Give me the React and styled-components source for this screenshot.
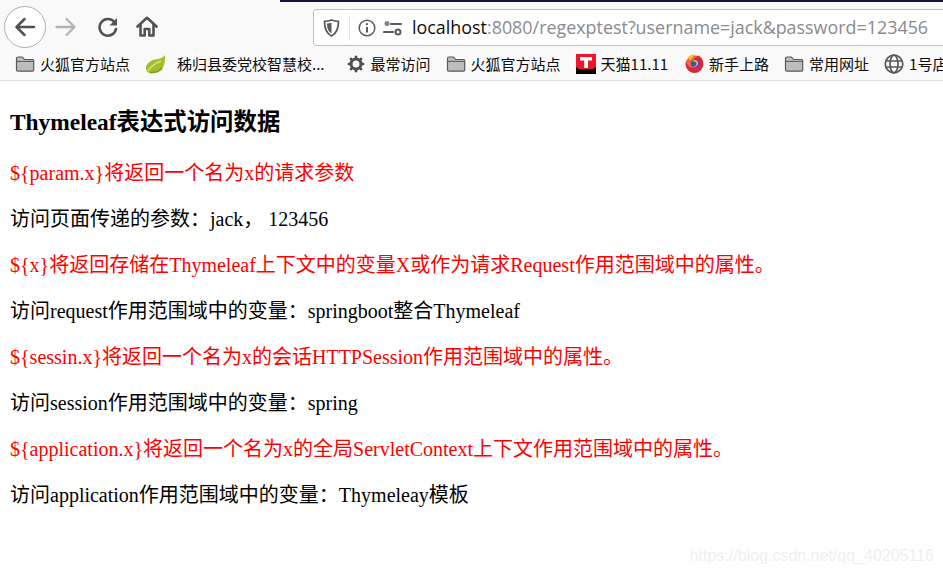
import React from "react";
import styled, { createGlobalStyle } from "styled-components";

const Global = createGlobalStyle`
  html, body { margin: 0; padding: 0; background: #fff; overflow: hidden; }
  body { font-family: "Liberation Serif", "Noto Sans CJK SC", serif; }
`;

const Page = styled.div`
  width: 943px;
  height: 575px;
  position: relative;
  overflow: hidden;
  background: #fff;
`;

const Chrome = styled.header`
  height: 81px;
  box-sizing: border-box;
  background: #f9f9fa;
  border-bottom: 1px solid #e0e0e1;
  position: relative;
  overflow: hidden;
`;

const TopEdge = styled.div`
  position: absolute;
  top: 0;
  left: 280px;
  right: 0;
  height: 2px;
  background: #15143a;
`;

const NavRow = styled.div`
  height: 46px;
  padding: 9px 0 0 4px;
  box-sizing: border-box;
  display: flex;
  align-items: flex-start;
`;

const BackButton = styled.div`
  width: 42px;
  height: 42px;
  margin-top: -3px;
  box-sizing: border-box;
  border: 1px solid #b1b1b3;
  border-radius: 50%;
  background: #fff;
  display: flex;
  align-items: center;
  justify-content: center;
  flex: none;
`;

const NavIcon = styled.div`
  width: 22px;
  height: 22px;
  margin-top: 7px;
  margin-left: ${(p) => p.$ml}px;
  flex: none;
  display: flex;
`;

const UrlBar = styled.div`
  width: 640px;
  height: 37px;
  margin-left: 155px;
  flex: none;
  box-sizing: border-box;
  background: #fff;
  border: 1px solid #c1c1c1;
  border-radius: 3px;
  display: flex;
  align-items: center;
  padding-left: 9px;
`;

const UrlDivider = styled.span`
  width: 1px;
  height: 26px;
  background: #e3e3e4;
  margin: 0 8px 0 9px;
`;

const UrlPerm = styled.span`
  display: flex;
  margin-left: 7px;
`;

const UrlText = styled.span`
  margin-left: 10px;
  padding-bottom: 2px;
  font: 17.9px "Open Sans", "Noto Sans", sans-serif;
  color: #8a8a8e;
  white-space: nowrap;
  b { font-weight: 400; color: #0c0c0d; }
`;

const BookmarkRow = styled.div`
  height: 34px;
  box-sizing: border-box;
  padding: 1px 0 0 15px;
  display: flex;
  align-items: center;
  white-space: nowrap;
`;

const Bookmark = styled.div`
  display: flex;
  align-items: center;
  flex: none;
  margin-right: ${(p) => p.$mr ?? 15}px;
  gap: ${(p) => p.$gap ?? 5}px;
  font: 15px "Noto Sans CJK SC", "Noto Sans", sans-serif;
  color: #0c0c0d;
`;

const Content = styled.main`
  padding: 0 10px;
`;

const Heading = styled.h3`
  margin: 0;
  padding-top: 28px;
  font-size: 23.4px;
  line-height: 27px;
  font-weight: 700;
  color: #000;
`;

const Line = styled.p`
  margin: 0;
  padding-top: ${(p) => (p.$first ? 24 : 20)}px;
  font-size: 20px;
  line-height: 26px;
  color: ${(p) => (p.$red ? "#ff0000" : "#000")};
  white-space: nowrap;
`;

const Watermark = styled.div`
  position: absolute;
  right: 9px;
  top: 547px;
  font: 16px "Liberation Sans", Arial, sans-serif;
  color: #efefef;
  white-space: nowrap;
`;

const Folder = () => (
  <svg width="20" height="18" viewBox="0 0 20 18">
    <path d="M1.500 15V3.500C1.500 2.700 2 2 3 2h4.500l2 2.500H17.500c.8 0 1.200.5 1.200 1.200V15c0 .8-.5 1.200-1.200 1.200H3c-1 0-1.500-.5-1.500-1.200z" fill="#bdbdbf" stroke="#59595c" strokeWidth="1.200" />
    <path d="M2 6.400h16.500" stroke="#59595c" strokeWidth="1" />
  </svg>
);

const Leaf = () => (
  <svg width="21" height="20" viewBox="0 0 21 20">
    <path d="M20 1C18 4 15 4.500 10 5.500 4 6.700.5 11 1 15c.2 2 1.500 3.700 3.500 4 4 .6 10 0 13-4.500C19.500 11 20.500 6 20 1z" fill="#a3bf2c" />
    <path d="M3 17c3-5 8-8 13-10" stroke="#d5e27a" strokeWidth="1.500" fill="none" />
    <path d="M5 18.500c5 .3 9-1 12-4.500" stroke="#7d9e22" strokeWidth="1.500" fill="none" />
  </svg>
);

const Gear = () => (
  <svg width="18" height="18" viewBox="0 0 18 18">
    <circle cx="9" cy="9" r="5" fill="none" stroke="#4f4f52" strokeWidth="3" />
    <path d="M9 .8v3M9 14.200v3M.8 9h3M14.200 9h3M3.200 3.200l2.100 2.100M12.700 12.700l2.100 2.100M14.800 3.200l-2.100 2.100M5.300 12.700l-2.100 2.100" stroke="#4f4f52" strokeWidth="2.600" />
  </svg>
);

const Tmall = () => (
  <svg width="20" height="20" viewBox="0 0 20 20">
    <rect width="20" height="20" fill="#000" />
    <path d="M0 0h20v13.500c-1.500 0-2 1.500-3 1.500H3c-1 0-1.500-1.500-3-1.500z" fill="#f0142f" />
    <path d="M4 3h12v3.500h-4V14H8.200V6.500H4z" fill="#fff" />
  </svg>
);

const Firefox = () => (
  <svg width="19" height="19" viewBox="0 0 19 19">
    <circle cx="9.500" cy="10" r="8.800" fill="#f2683a" />
    <path d="M9.500 18.800A8.800 8.800 0 0 1 1 7.500c1 3 3 6 7 6.500 4 .4 6.500-2 6-5C13.500 6.500 11 5.500 8.500 6c1-2 3.500-4 5-4.500 3 1.500 4.800 4.800 4.800 8.500a8.800 8.800 0 0 1-8.800 8.800z" fill="#e0233f" />
    <circle cx="10" cy="9.500" r="4.300" fill="#3b4fbf" />
    <path d="M7 7c2-1.600 5.500-1 6 1.500.5 3-2.500 5-5 4 2 0 3.500-1 3.500-2.800S9 7.200 7 7z" fill="#fbb72e" />
    <path d="M3 3C5 .8 8 .5 10.500 1 8 2 6.500 4 6 6 4.500 6 3.500 5 3 3z" fill="#ffb93b" />
  </svg>
);

const Globe = () => (
  <svg width="20" height="20" viewBox="0 0 20 20" fill="none" stroke="#59595c" strokeWidth="1.700">
    <circle cx="10" cy="10" r="8.800" />
    <ellipse cx="10" cy="10" rx="4" ry="8.800" />
    <path d="M1.800 7h16.400M1.800 13h16.400" />
  </svg>
);

const BackIcon = () => (
  <svg width="22" height="22" viewBox="0 0 22 22" fill="none" stroke="#525256" strokeWidth="2.500" strokeLinecap="round" strokeLinejoin="round">
    <path d="M20 11H2.500M10.500 3 2.500 11l8 8" />
  </svg>
);

const ForwardIcon = () => (
  <svg width="22" height="22" viewBox="0 0 22 22" fill="none" stroke="#b5b5b7" strokeWidth="2.300" strokeLinecap="round" strokeLinejoin="round">
    <path d="M1.500 11H19.500M11.500 3l8 8-8 8" />
  </svg>
);

const ReloadIcon = () => (
  <svg width="22" height="22" viewBox="0 0 22 22" fill="none">
    <path d="M17.600 6.500A8.300 8.300 0 1 0 19 13" stroke="#525256" strokeWidth="2.600" strokeLinecap="round" />
    <path d="M20 2v7.500h-7.500z" fill="#525256" />
  </svg>
);

const HomeIcon = () => (
  <svg width="22" height="22" viewBox="0 0 22 22" fill="none" stroke="#525256" strokeLinejoin="round" strokeLinecap="round">
    <path d="M1.500 10.500 11 1.800l9.500 8.700" strokeWidth="2.600" />
    <path d="M4.500 9v10.500h4.200V13h4.600v6.500h4.200V9" strokeWidth="2.600" />
  </svg>
);

const ShieldIcon = () => (
  <svg width="17" height="18" viewBox="0 0 17 18">
    <path d="M8.500 1c2.500 1 5 1.300 7 1.300 0 6.700-1.500 12-7 14.700C3 14.300 1.500 9 1.500 2.300c2 0 4.500-.3 7-1.300z" fill="none" stroke="#5b5b5f" strokeWidth="1.800" strokeLinejoin="round" />
    <path d="M8.500 3.500v10.800C5 12.500 4 8.500 4 4.500c1.500 0 3-.4 4.500-1z" fill="#5b5b5f" />
  </svg>
);

const InfoIcon = () => (
  <svg width="18" height="18" viewBox="0 0 18 18" fill="none" stroke="#5b5b5f">
    <circle cx="9" cy="9" r="7.800" strokeWidth="1.500" />
    <path d="M9 8v5.500" strokeWidth="2" />
    <circle cx="9" cy="5.200" r="1.100" fill="#5b5b5f" stroke="none" />
  </svg>
);

const PermIcon = () => (
  <svg width="19" height="16" viewBox="0 0 19 16" fill="none" stroke="#5b5b5f">
    <circle cx="4" cy="3.500" r="2.500" fill="#5b5b5f" opacity="0.75" stroke="none" />
    <path d="M8 4h10" strokeWidth="2.200" strokeLinecap="round" />
    <path d="M1 12h9" strokeWidth="2.200" strokeLinecap="round" />
    <circle cx="15" cy="12" r="2.500" strokeWidth="2" />
  </svg>
);

export default function App() {
  return (
    <Page>
      <Global />
      <Chrome>
        <TopEdge />
        <NavRow>
          <BackButton>
            <BackIcon />
          </BackButton>
          <NavIcon $ml={9}><ForwardIcon /></NavIcon>
          <NavIcon $ml={20}><ReloadIcon /></NavIcon>
          <NavIcon $ml={17}><HomeIcon /></NavIcon>
          <UrlBar>
            <ShieldIcon />
            <UrlDivider />
            <InfoIcon />
            <UrlPerm><PermIcon /></UrlPerm>
            <UrlText><b>localhost</b>:8080/regexptest?username=jack&amp;password=123456</UrlText>
          </UrlBar>
        </NavRow>
        <BookmarkRow>
          <Bookmark><Folder />火狐官方站点</Bookmark>
          <Bookmark $gap={11} $mr={22}><Leaf />秭归县委党校智慧校...</Bookmark>
          <Bookmark $gap={6}><Gear />最常访问</Bookmark>
          <Bookmark><Folder />火狐官方站点</Bookmark>
          <Bookmark $mr={17}><Tmall />天猫11.11</Bookmark>
          <Bookmark><Firefox />新手上路</Bookmark>
          <Bookmark><Folder />常用网址</Bookmark>
          <Bookmark><Globe />1号店</Bookmark>
        </BookmarkRow>
      </Chrome>
      <Content>
        <Heading>Thymeleaf表达式访问数据</Heading>
        <Line $first $red>{"${param.x}"}将返回一个名为x的请求参数</Line>
        <Line>访问页面传递的参数：jack， 123456</Line>
        <Line $red>{"${x}"}将返回存储在Thymeleaf上下文中的变量X或作为请求Request作用范围域中的属性。</Line>
        <Line>访问request作用范围域中的变量：springboot整合Thymeleaf</Line>
        <Line $red>{"${sessin.x}"}将返回一个名为x的会话HTTPSession作用范围域中的属性。</Line>
        <Line>访问session作用范围域中的变量：spring</Line>
        <Line $red>{"${application.x}"}将返回一个名为x的全局ServletContext上下文作用范围域中的属性。</Line>
        <Line>访问application作用范围域中的变量：Thymeleay模板</Line>
      </Content>
      <Watermark>https://blog.csdn.net/qq_40205116</Watermark>
    </Page>
  );
}
